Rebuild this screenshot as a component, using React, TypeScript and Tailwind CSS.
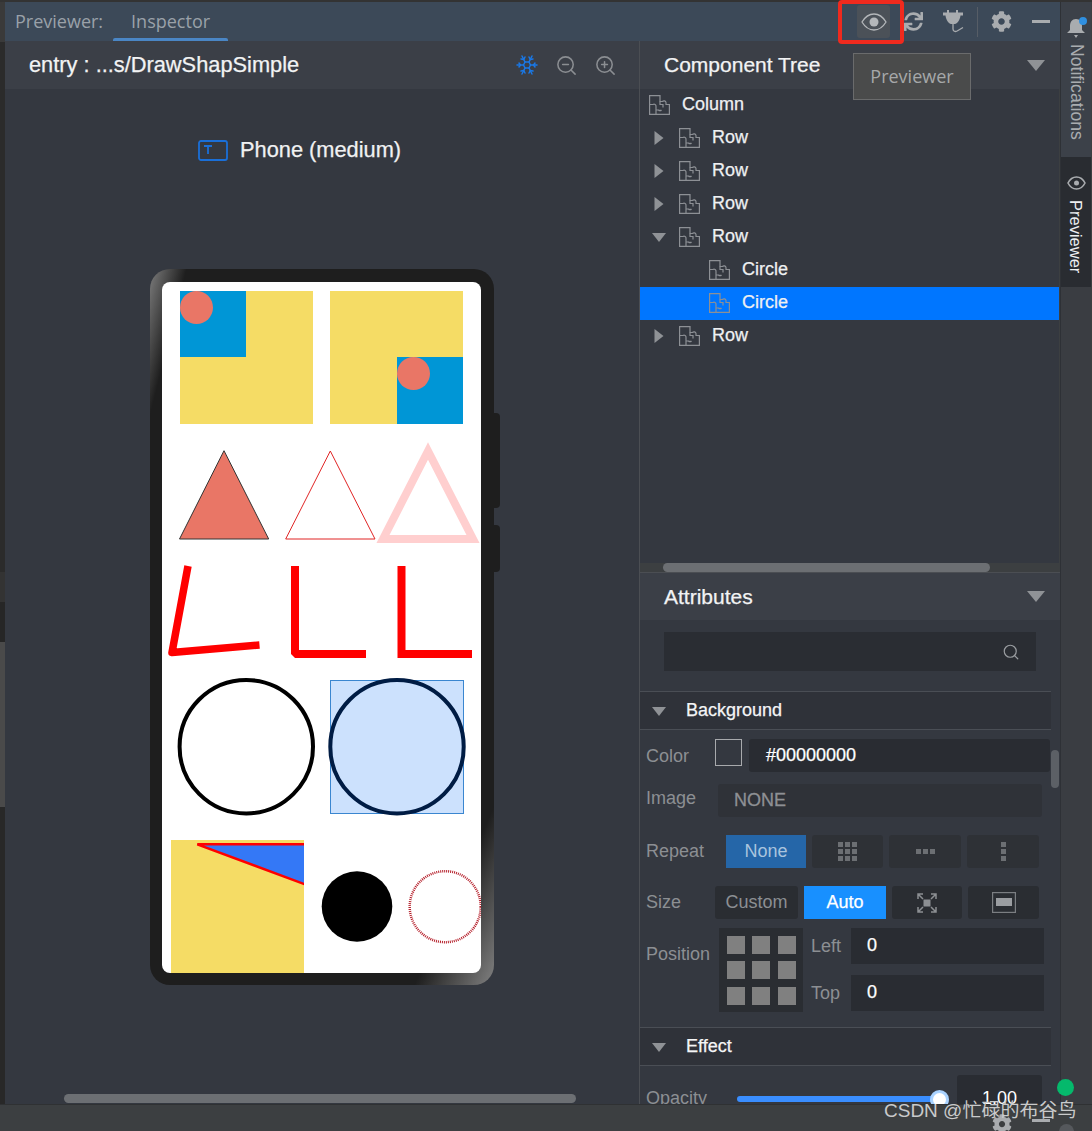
import { Snowflake, ZoomIn, ZoomOut, Search } from "lucide-react";
import { FaCog, FaSync } from "react-icons/fa";

const SANS = "font-['Liberation_Sans','Noto_Sans_CJK_SC',sans-serif]";

function PuzzleIcon() {
  return (
    <svg width="21" height="20" viewBox="0 0 21 20" fill="none" stroke="#8d9095" strokeWidth="1.2" className="shrink-0">
      <path d="M0.6 19.400V0.600H11V6.500H13.500a2 2 0 0 1 3.500 1V9.500H20.400V19.400z" />
      <path d="M0.600 9.500H4a2 2 0 0 1 3 2V15H9.500a2 2 0 0 0 3 0M7 15V19.400M11 6.500V9.500H14V12.500" />
    </svg>
  );
}

function Tri({ open }: { open?: boolean }) {
  return (
    <svg width="14" height="16" viewBox="0 0 14 16" fill="#8f9296" className="shrink-0">
      {open ? <path d="M0 4h14L7 13z" /> : <path d="M2.500 1l9 7-9 7z" />}
    </svg>
  );
}

function TreeRow({ label, depth, arrow, selected }: { label: string; depth: number; arrow?: "open" | "closed"; selected?: boolean }) {
  const pad = depth === 0 ? "pl-[9px]" : depth === 1 ? "pl-[12px]" : "pl-[69px]";
  return (
    <div className={`flex h-[33px] items-center pb-[2px] ${pad} ${selected ? "bg-[#0076ff]" : ""}`}>
      {arrow && <span className="mr-[13px] flex w-[14px] justify-center"><Tri open={arrow === "open"} /></span>}
      <PuzzleIcon />
      <span className="ml-[12px] text-[18px] text-[#eef0f2] [-webkit-text-stroke:0.25px]">{label}</span>
    </div>
  );
}

function SectionHead({ label }: { label: string }) {
  return (
    <div className="flex h-[39px] w-[411px] items-center border-y border-[#4a4e55] bg-[#2f3239] pl-[12px]">
      <Tri open />
      <span className="ml-[20px] text-[18px] text-[#f4f5f6] [-webkit-text-stroke:0.25px]">{label}</span>
    </div>
  );
}

function Dots({ cols, rows }: { cols: number; rows: number }) {
  return (
    <svg width={cols * 7 - 2} height={rows * 7 - 2} viewBox={`0 0 ${cols * 7 - 2} ${rows * 7 - 2}`} fill="#6c6f73">
      {Array.from({ length: rows }).flatMap((_, r) =>
        Array.from({ length: cols }).map((_, c) => <rect key={`${r}-${c}`} x={c * 7} y={r * 7} width="5" height="5" />)
      )}
    </svg>
  );
}

function Screen() {
  return (
    <svg width="319" height="691" viewBox="0 0 319 691" className="block">
      <rect x="18" y="9" width="133" height="133" fill="#f5dc65" />
      <rect x="18" y="9" width="66" height="66" fill="#0096d6" />
      <circle cx="34.500" cy="25.500" r="16.500" fill="#e97666" />
      <rect x="168" y="9" width="133" height="133" fill="#f5dc65" />
      <rect x="235" y="75" width="66" height="67" fill="#0096d6" />
      <circle cx="251.500" cy="91.500" r="16.500" fill="#e97666" />

      <path d="M62 168.700L17.500 257H106.700z" fill="#e97666" stroke="#333" strokeWidth="1" />
      <path d="M168.300 169L123.700 257H213z" fill="#fff" stroke="#e02525" strokeWidth="1" />
      <path d="M266 169L221 257H311z" fill="none" stroke="#ffcfcf" strokeWidth="8" />

      <path d="M26 284L10 370.500L97.500 363" fill="none" stroke="#ff0000" strokeWidth="7.500" strokeLinejoin="round" />
      <path d="M133 284V372H204" fill="none" stroke="#ff0000" strokeWidth="8" strokeLinejoin="bevel" />
      <path d="M239.500 284V372H310" fill="none" stroke="#ff0000" strokeWidth="8" />

      <circle cx="84.300" cy="464.700" r="66.700" fill="none" stroke="#000" strokeWidth="4" />
      <rect x="168.500" y="398.500" width="133" height="133" fill="#cce1fd" stroke="#3a86d0" strokeWidth="1" />
      <circle cx="235" cy="464.700" r="66.700" fill="none" stroke="#001c44" strokeWidth="4" />

      <rect x="9" y="558" width="133" height="133" fill="#f5dc65" />
      <svg x="9" y="558" width="133" height="133" viewBox="9 558 133 133">
        <path d="M35.300 562.300H150V605z" fill="#3478f6" stroke="#ff0000" strokeWidth="2.500" />
      </svg>
      <circle cx="195" cy="624.500" r="35.300" fill="#000" />
      <circle cx="283.200" cy="624.700" r="35.500" fill="none" stroke="#b51f2a" strokeWidth="2.500" strokeDasharray="1 1" />
    </svg>
  );
}

function Phone() {
  return (
    <div className="relative ml-[145px] mt-[104px] h-[716px] w-[344px] rounded-[20px] bg-[linear-gradient(104deg,#7c7c7c_0%,rgba(30,30,30,0)_7%),linear-gradient(114deg,rgba(30,30,30,0)_88%,#808080_100%)] bg-[#1e1e1e] px-[12px] pb-[12px] pt-[13px]">
      <div className="h-[691px] w-[319px] overflow-hidden rounded-[8px] bg-white">
        <Screen />
      </div>
      <div className="absolute left-[344px] top-[144px] h-[95px] w-[6px] rounded-r-[4px] bg-[#1e1e1e]" />
      <div className="absolute left-[344px] top-[256px] h-[47px] w-[6px] rounded-r-[4px] bg-[#1e1e1e]" />
    </div>
  );
}

function LeftPanel() {
  return (
    <div className="flex h-full w-[635px] shrink-0 flex-col border-r border-[#4b4e53] bg-[#343840]">
      <div className="flex h-[48px] shrink-0 items-center bg-[#3b3f47] pl-[24px] pr-[22px]">
        <span className="text-[21.800px] text-[#f2f3f4] [-webkit-text-stroke:0.25px]">entry : ...s/DrawShapSimple</span>
        <div className="ml-auto flex items-center gap-[16px]">
          <Snowflake size={24} color="#1a78e6" strokeWidth={1.500} />
          <ZoomOut size={23} color="#8b8e92" strokeWidth={1.600} />
          <ZoomIn size={23} color="#8b8e92" strokeWidth={1.600} />
        </div>
      </div>
      <div className="ml-[193px] mt-[46px] flex h-[30px] items-center">
        <svg width="30" height="21" viewBox="0 0 30 21" fill="none" stroke="#1a6fd8" strokeWidth="1.800">
          <rect x="1" y="1" width="28" height="19" rx="2" />
          <path d="M6 6h8M10 6v8" />
        </svg>
        <span className="ml-[12px] text-[21.800px] text-[#f0f1f2] [-webkit-text-stroke:0.25px]">Phone (medium)</span>
      </div>
      <Phone />
      <div className="ml-[59px] mt-auto mb-[1px] h-[9px] w-[512px] rounded-full bg-[#6c6f73]" />
    </div>
  );
}

function TreePanel() {
  return (
    <div className="h-[531px] shrink-0">
      <div className="flex h-[48px] items-center bg-[#3b3f47] pl-[24px] pr-[15px]">
        <span className="text-[21px] text-[#f2f3f4] [-webkit-text-stroke:0.25px]">Component Tree</span>
        <svg className="ml-auto" width="18" height="11" viewBox="0 0 18 11" fill="#8f9296"><path d="M0 0h18L9 11z" /></svg>
      </div>
      <div className="h-[474px] w-[419px] bg-[#343840]">
        <TreeRow label="Column" depth={0} />
        <TreeRow label="Row" depth={1} arrow="closed" />
        <TreeRow label="Row" depth={1} arrow="closed" />
        <TreeRow label="Row" depth={1} arrow="closed" />
        <TreeRow label="Row" depth={1} arrow="open" />
        <TreeRow label="Circle" depth={2} />
        <TreeRow label="Circle" depth={2} selected />
        <TreeRow label="Row" depth={1} arrow="closed" />
      </div>
      <div className="ml-[23px] h-[9px] w-[327px] rounded-full bg-[#6c6f73]" />
    </div>
  );
}

function Label({ children, className = "" }: { children: string; className?: string }) {
  return <span className={`text-[18px] text-[#8c8f93] ${className}`}>{children}</span>;
}

function AttributesPanel() {
  return (
    <div className="relative flex-1 overflow-hidden border-t border-[#4b4e53] bg-[#343840]">
      <div className="flex h-[47px] items-center bg-[#3b3f47] pl-[24px] pr-[15px]">
        <span className="text-[21px] text-[#f2f3f4] [-webkit-text-stroke:0.25px]">Attributes</span>
        <svg className="ml-auto" width="18" height="11" viewBox="0 0 18 11" fill="#8f9296"><path d="M0 0h18L9 11z" /></svg>
      </div>
      <div className="ml-[24px] mt-[12px] flex h-[39px] w-[372px] items-center justify-end bg-[#2a2d33] pr-[16px]">
        <Search size={18} color="#9a9da1" strokeWidth={1.600} />
      </div>
      <div className="mt-[20px]"><SectionHead label="Background" /></div>

      <div className="mt-[9px] flex h-[33px] items-center pl-[6px]">
        <Label className="mt-[2px] w-[69px]">Color</Label>
        <div className="mb-[6px] h-[27px] w-[27px] border border-[#a8aaad]" />
        <div className="ml-[7px] flex h-[33px] w-[301px] items-center rounded-[3px] bg-[#292c32] pl-[17px] text-[18px] text-white [-webkit-text-stroke:0.25px]">#00000000</div>
      </div>
      <div className="mt-[12px] flex h-[33px] items-center pl-[6px]">
        <Label className="mb-[4px] w-[72px]">Image</Label>
        <div className="flex h-[33px] w-[324px] items-center rounded-[3px] bg-[#2f3238] pl-[16px] text-[18px] text-[#8e9094] [-webkit-text-stroke:0.3px]">NONE</div>
      </div>
      <div className="mt-[18px] flex h-[33px] items-center pl-[6px]">
        <Label className="w-[80px]">Repeat</Label>
        <div className="flex h-[33px] w-[80px] items-center justify-center bg-[#2566a8] text-[18px] text-[#a9c4de]">None</div>
        <div className="ml-[6px] flex h-[33px] w-[71px] items-center justify-center rounded-[3px] bg-[#2e3136]"><Dots cols={3} rows={3} /></div>
        <div className="ml-[6px] flex h-[33px] w-[72px] items-center justify-center rounded-[3px] bg-[#2e3136]"><Dots cols={3} rows={1} /></div>
        <div className="ml-[6px] flex h-[33px] w-[72px] items-center justify-center rounded-[3px] bg-[#2e3136]"><Dots cols={1} rows={3} /></div>
      </div>
      <div className="mt-[18px] flex h-[33px] items-center pl-[6px]">
        <Label className="w-[69px]">Size</Label>
        <div className="flex h-[33px] w-[83px] items-center justify-center rounded-[3px] bg-[#2a2d32] text-[18px] text-[#8c8f93]">Custom</div>
        <div className="ml-[6px] flex h-[33px] w-[82px] items-center justify-center bg-[#1890ff] text-[18px] text-white [-webkit-text-stroke:0.25px]">Auto</div>
        <div className="ml-[6px] flex h-[33px] w-[70px] items-center justify-center rounded-[3px] bg-[#2a2d32]">
          <svg width="20" height="20" viewBox="0 0 20 20" fill="none" stroke="#8c8f93" strokeWidth="1.500">
            <rect x="6.500" y="6.500" width="7" height="7" fill="#8c8f93" stroke="none" />
            <path d="M1 6V1h5M14 1h5v5M19 14v5h-5M6 19H1v-5M1 1l5 5M19 1l-5 5M19 19l-5-5M1 19l5-5" />
          </svg>
        </div>
        <div className="ml-[6px] flex h-[33px] w-[71px] items-center justify-center rounded-[3px] bg-[#2a2d32]">
          <svg width="24" height="21" viewBox="0 0 24 21" fill="none" stroke="#7b7e82" strokeWidth="1.200">
            <rect x="0.600" y="0.600" width="22.800" height="19.800" />
            <rect x="4" y="6" width="16" height="8" fill="#9a9da1" stroke="none" />
          </svg>
        </div>
      </div>
      <div className="mt-[9px] flex h-[84px] items-start pl-[6px]">
        <Label className="mt-[13px] w-[73px]">Position</Label>
        <div className="grid h-[84px] w-[84px] grid-cols-[18px_18px_18px] grid-rows-[18px_18px_18px] content-center justify-center gap-x-[7.500px] gap-y-[7.500px] bg-[#2a2d32]">
          {Array.from({ length: 9 }).map((_, i) => <div key={i} className="bg-[#808080]" />)}
        </div>
        <div className="ml-[8px] flex flex-col gap-[11px]">
          {[["Left", "0"], ["Top", "0"]].map(([k, v]) => (
            <div key={k} className="flex h-[36px] items-center">
              <Label className="w-[40px]">{k}</Label>
              <div className="flex h-[36px] w-[193px] items-center bg-[#292c32] pb-[1px] pl-[16px] text-[18px] text-white [-webkit-text-stroke:0.25px]">{v}</div>
            </div>
          ))}
        </div>
      </div>
      <div className="mt-[15px]"><SectionHead label="Effect" /></div>
      <div className="mt-[9px] flex h-[40px] items-start pl-[6px]">
        <Label className="mt-[10px] w-[91px]">Opacity</Label>
        <div className="relative mt-[21px] h-[6px] w-[202px] rounded-full bg-[#3a8eff]">
          <div className="absolute -right-[10px] -top-[6px] h-[19px] w-[19px] rounded-full border-[3px] border-[#a9d2ff] bg-white" />
        </div>
        <div className="ml-[18px] flex h-[40px] w-[85px] items-center justify-center rounded-[3px] bg-[#292c32] pt-[6px] text-[18px] text-white">1.00</div>
      </div>
      <div className="absolute right-[1px] top-[177px] h-[38px] w-[8px] rounded-full bg-[#5c6066]" />
    </div>
  );
}

function HeaderBar() {
  return (
    <div className="relative flex h-[39px] shrink-0 items-center bg-[#3c4958]">
      <span className="ml-[10px] font-['Open_Sans',sans-serif] text-[18px] text-[#9aa1a9]">Previewer:</span>
      <div className="relative ml-[10px] flex h-[39px] w-[115px] items-center justify-center pb-[1px]">
        <span className="font-['Open_Sans',sans-serif] text-[18px] text-[#9aa1a9]">Inspector</span>
        <div className="absolute bottom-0 left-0 h-[3px] w-full rounded-t-[2px] bg-[#4a86c5]" />
      </div>
      <div className="ml-auto flex items-center pr-[10px]">
        <div className="flex h-[33px] w-[33px] items-center justify-center rounded-[3px] bg-[#4b5158]">
          <svg width="26" height="18" viewBox="0 0 26 18" fill="none" stroke="#b4b7ba" strokeWidth="1.300">
            <path d="M1 9c3-5 7-8 12-8s9 3 12 8c-3 5-7 8-12 8S4 14 1 9z" />
            <circle cx="13" cy="9" r="4.500" fill="#b4b7ba" stroke="none" />
          </svg>
        </div>
        <FaSync size={19} color="#a9acaf" className="ml-[14px]" />
        <svg className="ml-[19px]" width="22" height="24" viewBox="0 0 22 24" fill="none">
          <path d="M1 2.500H21V5.500H18.500C18 10 15 14 13 14H9C7 14 4 10 3.500 5.500H1z" fill="#a9acaf" />
          <path d="M6 0v3M15 0v3" stroke="#a9acaf" strokeWidth="2" />
          <path d="M11 14v5c0 3 3 3 5 1.500l5-3" stroke="#a9acaf" strokeWidth="1.300" />
        </svg>
        <div className="ml-[13px] h-[30px] w-[1px] bg-[#565d66]" />
        <FaCog size={21} color="#a9acaf" className="ml-[13px]" />
        <div className="ml-[20px] h-[3px] w-[18px] bg-[#a9acaf]" />
      </div>
      <div className="absolute left-[833px] -top-[2px] h-[44px] w-[66px] rounded-[4px] border-[4px] border-[#f02a1e]" />
    </div>
  );
}

function RightStrip() {
  return (
    <div className="flex w-[31px] shrink-0 flex-col items-center border-l border-[#2e3136] bg-[#3a3d42]">
      <div className="flex h-[155px] w-full flex-col items-center bg-[#3c4149] pt-[15px]">
        <div className="relative">
          <svg width="18" height="22" viewBox="0 0 18 22" fill="#a9acaf">
            <path d="M9 2c4 0 6 3 6 7v4l3 3H0l3-3V9c0-4 2-7 6-7zM7 18h4l-2 3z" />
          </svg>
          <div className="absolute -right-[2px] top-0 h-[8px] w-[8px] rounded-full bg-[#2f8fe0]" />
        </div>
        <span className="mt-[5px] text-[17.600px] leading-none text-[#a9acaf] [writing-mode:vertical-rl]">Notifications</span>
      </div>
      <div className="flex h-[130px] w-full flex-col items-center bg-[#292c31] pt-[19px]">
        <svg width="19" height="14" viewBox="0 0 19 14" fill="none" stroke="#a9acaf" strokeWidth="1.600">
          <path d="M1 7c2-4 5-6 8.500-6S16 3 18 7c-2 4-5 6-8.500 6S3 11 1 7z" />
          <circle cx="9.500" cy="7" r="2.500" fill="#a9acaf" stroke="none" />
        </svg>
        <span className="mt-[10px] text-[16.500px] leading-none text-[#eef0f2] [writing-mode:vertical-rl]">Previewer</span>
      </div>
    </div>
  );
}

function LeftSliver() {
  return (
    <div className="flex h-full w-[5px] shrink-0 flex-col bg-[#2b2b2b]">
      <div className="h-[40px] shrink-0 bg-[#3a3a3a]" />
      <div className="h-[530px] shrink-0 bg-[#2b2b2b]" />
      <div className="h-[30px] shrink-0 bg-[#333333]" />
      <div className="h-[40px] shrink-0 bg-[#262626]" />
      <div className="h-[165px] shrink-0 bg-[#4a4a4a]" />
      <div className="flex-1 bg-[#282828]" />
    </div>
  );
}

export default function App() {
  return (
    <div className={`relative flex h-[1131px] w-[1092px] flex-col overflow-hidden bg-[#3c3f41] ${SANS}`}>
      <div className="h-[2px] shrink-0 bg-[#333333]" />
      <div className="flex h-[1102px] shrink-0">
        <LeftSliver />
        <div className="flex w-[1055px] shrink-0 flex-col">
          <HeaderBar />
          <div className="flex min-h-0 flex-1">
            <LeftPanel />
            <div className="flex w-[420px] shrink-0 flex-col">
              <TreePanel />
              <AttributesPanel />
            </div>
          </div>
        </div>
        <RightStrip />
      </div>
      <div className="flex flex-1 items-start justify-end border-t border-[#2f3133] pr-[42px] pt-[9px]">
        <FaCog size={20} color="#a9acaf" />
        <div className="ml-[20px] mt-[5px] h-[3px] w-[18px] bg-[#a9acaf]" />
      </div>
      <div className="absolute left-[1057px] top-[1079px] h-[17px] w-[17px] rounded-full bg-[#05b96c]" />
      <div className="absolute left-[1059px] top-[1124px] h-[15px] w-[15px] rounded-full bg-[#55585c]" />
      <div className="absolute left-[853px] top-[53px] flex h-[47px] w-[118px] items-center justify-center border border-[#6a6b6c] bg-[#4a4b4b] font-['Open_Sans',sans-serif] text-[18px] text-[#a6a8a9]">Previewer</div>
      <div className="absolute left-[884px] top-[1098px] text-[19px] leading-[26px] text-[#c9cacb]">CSDN @忙碌的布谷鸟</div>
    </div>
  );
}
